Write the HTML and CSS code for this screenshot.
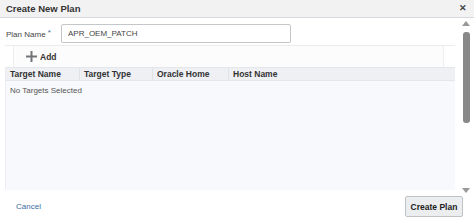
FILE: index.html
```html
<!DOCTYPE html>
<html lang="en">
<head>
    <meta charset="UTF-8">
    <title>Create New Plan</title>
    <link rel="stylesheet" href="styles.css">
</head>
<body>
<div class="dialog">
    <!-- title -->
    <header class="title-bar">
        <span class="title">Create New Plan</span>
        <span class="close">&#x2715;</span>
    </header>
    <!-- content -->
    <div class="content">
        <div class="main">
            <div class="plan-row">
                <label class="plan-label">Plan Name <span class="req">*</span></label>
                <input class="plan-input" type="text" value="APR_OEM_PATCH">
            </div>
            <div class="toolbar-wrap">
                <div class="toolbar">
                    <span class="add-btn">
                        <svg class="plus" width="11" height="11" viewBox="0 0 11 11"><path d="M4.5 0h2v4.5H11v2H6.5V11h-2V6.5H0v-2h4.5z" fill="#707478"/></svg>
                        Add
                    </span>
                </div>
            </div>
            <div class="table">
                <div class="thead">
                    <div class="th c1">Target Name</div>
                    <div class="th c2">Target Type</div>
                    <div class="th c3">Oracle Home</div>
                    <div class="th c4">Host Name</div>
                </div>
                <div class="tbody">
                    <div class="empty">No Targets Selected</div>
                </div>
            </div>
        </div>
        <div class="scrollbar">
            <span class="arrow up"></span>
            <div class="track"><div class="thumb"></div></div>
            <span class="arrow down"></span>
        </div>
    </div>
    <!-- footer -->
    <footer class="footer">
        <a class="cancel" href="#">Cancel</a>
        <button class="create-btn">Create Plan</button>
    </footer>
</div>
</body>
</html>
```

FILE: styles.css
```css
* { margin: 0; padding: 0; box-sizing: border-box; }
html, body { width: 474px; height: 220px; }
body {
    font-family: "Liberation Sans", Arial, sans-serif;
    color: #333;
    background: #fff;
}
a { text-decoration: none; }
input, button { outline: none; font-family: inherit; }

.dialog {
    width: 474px;
    height: 220px;
    display: flex;
    flex-direction: column;
    background: #fff;
}

/* title */
.title-bar {
    height: 18px;
    flex: none;
    display: flex;
    justify-content: space-between;
    align-items: center;
    padding: 0 7px 1px 6px;
    background: #f2f2f2;
    border-bottom: 1px solid #d5d9dd;
}
.title-bar .title {
    font-size: 9.5px;
    font-weight: bold;
    color: #333;
}
.title-bar .close {
    font-size: 9px;
    font-weight: bold;
    color: #444;
}

/* content */
.content {
    height: 175px;
    flex: none;
    display: flex;
}
.main {
    flex: 1;
    display: flex;
    flex-direction: column;
    padding: 6px 3px 0 5px;
}
.plan-row {
    display: flex;
    align-items: center;
    height: 19px;
}
.plan-label {
    width: 56px;
    padding-left: 1px;
    font-size: 8px;
    color: #444;
    white-space: nowrap;
}
.plan-label .req {
    color: #3a6ea5;
    font-size: 8px;
    vertical-align: 2px;
}
.plan-input {
    width: 230px;
    height: 19px;
    border: 1px solid #c4c7ca;
    border-radius: 2px;
    padding: 0 6px;
    font-size: 8px;
    color: #444;
    background: #fff;
}
.toolbar-wrap {
    margin-top: 2px;
    border-top: 1px solid #eaecee;
    padding: 0 11px 0 8px;
}
.toolbar {
    height: 21px;
    display: flex;
    align-items: center;
    padding-left: 12px;
    border-left: 1px solid #eceef0;
    border-right: 1px solid #eceef0;
    background: #fcfcfc;
}
.add-btn {
    display: flex;
    align-items: center;
    gap: 3px;
    font-size: 8.5px;
    font-weight: bold;
    color: #333;
}

/* table */
.table {
    flex: 1;
    display: flex;
    flex-direction: column;
    margin-bottom: 3px;
    border-left: 1px solid #eceef0;
    background: #f8f9fc;
}
.thead {
    height: 14px;
    display: flex;
    background: #eef0f3;
    border-top: 1px solid #e3e6ea;
    border-bottom: 1px solid #e3e6ea;
}
.th {
    font-size: 8.5px;
    font-weight: bold;
    color: #333;
    line-height: 12px;
    padding-left: 4px;
    border-right: 1px solid #dfe2e6;
}
.th.c1 { width: 74px; }
.th.c2 { width: 73px; }
.th.c3 { width: 76px; }
.th.c4 { flex: 1; border-right: none; }
.tbody {
    flex: 1;
    background: #f7f9fc;
}
.empty {
    padding: 5px 0 0 4px;
    font-size: 8px;
    color: #555;
}

/* scrollbar */
.scrollbar {
    width: 16px;
    flex: none;
    display: flex;
    flex-direction: column;
    align-items: center;
    padding: 3px 0 0 0;
}
.arrow {
    width: 0;
    height: 0;
    border-left: 4px solid transparent;
    border-right: 4px solid transparent;
}
.arrow.up { border-bottom: 5px solid #999; }
.arrow.down { border-top: 5px solid #999; }
.track {
    flex: 1;
    width: 100%;
    display: flex;
    justify-content: center;
    padding-top: 6px;
}
.thumb {
    width: 7px;
    height: 91px;
    background: #888;
    border-radius: 3px;
}

/* footer */
.footer {
    flex: 1;
    display: flex;
    justify-content: space-between;
    align-items: center;
    padding: 0 11px 0 16px;
}
.cancel {
    font-size: 8px;
    color: #3a6ea5;
}
.create-btn {
    width: 58px;
    height: 21px;
    font-size: 8.5px;
    font-weight: bold;
    color: #222;
    background: #ebedef;
    border: 1px solid #c0c3c6;
    border-radius: 2px;
}
```
